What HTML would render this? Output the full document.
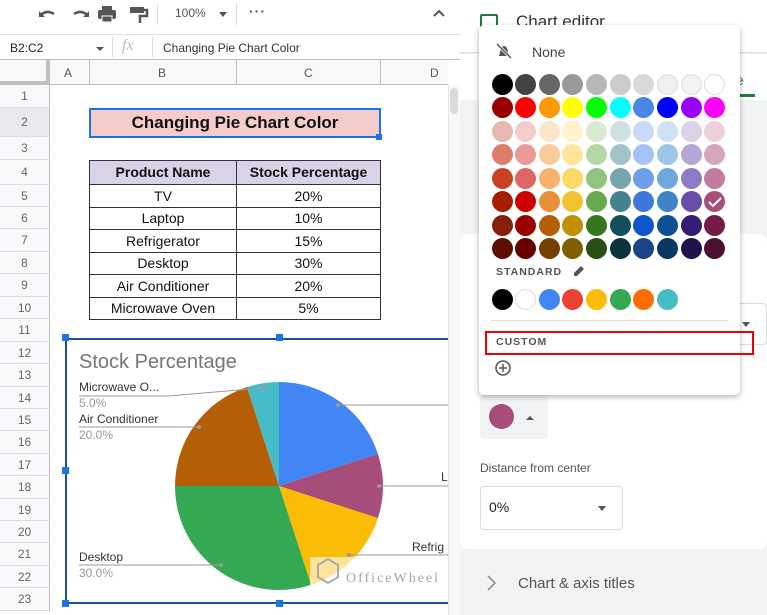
<!DOCTYPE html>
<html><head><meta charset="utf-8"><style>
*{margin:0;padding:0;box-sizing:border-box}
body{width:767px;height:615px;overflow:hidden;position:relative;background:#fff;font-family:"Liberation Sans",Arial,sans-serif}
.a{position:absolute}
.rh{position:absolute;left:0;width:50px;text-align:center;font-size:12px;color:#666;border-bottom:1px solid #dadce0;background:#f8f9fa;border-right:1px solid #c0c0c0}
.gl{position:absolute;left:50px;width:398px;height:1px;background:#e2e2e2}
.tc{position:absolute;text-align:center;font-size:14px;color:#111;border:1px solid #333;background:#fff}
.dot{position:absolute;width:21px;height:21px;border-radius:50%}
</style></head><body>
<!-- toolbar -->
<div class="a" style="left:0;top:0;width:460px;height:35px;background:#fff;border-bottom:1px solid #e0e0e0"></div>
<svg class="a" style="left:36px;top:5px" width="130" height="20" viewBox="0 0 130 20">
<path d="M4 11 Q10 4 18 9" stroke="#555" stroke-width="2.5" fill="none"/><path d="M3 6 L3 12 L9 12" fill="#555"/>
<path d="M40 11 Q34 4 26 9" stroke="#555" stroke-width="2.5" fill="none" transform="translate(12,0)"/><path d="M53 6 L53 12 L47 12" fill="#555"/>
<rect x="62" y="5" width="18" height="9" rx="2" fill="#555"/><rect x="66" y="1" width="10" height="4" fill="#555"/><rect x="66" y="11" width="10" height="6" fill="#555" stroke="#fff"/>
<rect x="94" y="2" width="14" height="6" fill="#555"/><path d="M108 5 h3 v6 h-7 v7" stroke="#555" stroke-width="2.5" fill="none"/>
</svg>
<div class="a" style="left:157px;top:5px;width:1px;height:20px;background:#ddd"></div>
<div class="a" style="left:175px;top:6px;font-size:12px;color:#555">100%</div>
<div class="a" style="left:219px;top:12px;border:4px solid transparent;border-top:5px solid #555"></div>
<div class="a" style="left:236px;top:3px;width:1px;height:22px;background:#ddd"></div>
<div class="a" style="left:249px;top:3px;font-size:14px;color:#555;letter-spacing:1px;font-weight:bold">···</div>
<svg class="a" style="left:432px;top:8px" width="14" height="10"><path d="M2 8 L7 3 L12 8" stroke="#555" stroke-width="2" fill="none"/></svg>
<!-- formula bar -->
<div class="a" style="left:0;top:35px;width:460px;height:25px;border-bottom:1px solid #c0c0c0;background:#fff"></div>
<div class="a" style="left:10px;top:41px;font-size:12px;color:#222">B2:C2</div>
<div class="a" style="left:96px;top:47px;border:4px solid transparent;border-top:4px solid #555"></div>
<div class="a" style="left:112px;top:37px;width:1px;height:20px;background:#ddd"></div>
<div class="a" style="left:122px;top:37px;font-size:16px;color:#bbb;font-style:italic;font-family:'Liberation Serif',serif">fx</div>
<div class="a" style="left:152px;top:37px;width:1px;height:20px;background:#ddd"></div>
<div class="a" style="left:163px;top:41px;font-size:12px;color:#333">Changing Pie Chart Color</div>
<!-- column headers -->
<div class="a" style="left:0;top:60px;width:448px;height:25px;background:#f8f9fa;border-bottom:1px solid #c0c0c0"></div>
<div class="a" style="left:0;top:60px;width:50px;height:25px;border-right:4px solid #c0c0c0;border-bottom:4px solid #c0c0c0"></div>
<div class="a" style="left:89px;top:60px;width:1px;height:25px;background:#c0c0c0"></div>
<div class="a" style="left:236px;top:60px;width:1px;height:25px;background:#c0c0c0"></div>
<div class="a" style="left:380px;top:60px;width:1px;height:25px;background:#c0c0c0"></div>
<div class="a" style="left:64px;top:66px;font-size:12px;color:#555">A</div>
<div class="a" style="left:158px;top:66px;font-size:12px;color:#555">B</div>
<div class="a" style="left:304px;top:66px;font-size:12px;color:#555">C</div>
<div class="a" style="left:430px;top:66px;font-size:12px;color:#555">D</div>
<!-- row headers -->
<div class="rh" style="top:85px;height:23px;line-height:23px">1</div>
<div class="rh" style="top:108px;height:29px;line-height:29px;background:#e8eaed">2</div>
<div class="rh" style="top:137px;height:23px;line-height:23px">3</div>
<div class="rh" style="top:160px;height:25px;line-height:25px">4</div>
<div class="rh" style="top:185px;height:22px;line-height:22px">5</div>
<div class="rh" style="top:207px;height:22px;line-height:22px">6</div>
<div class="rh" style="top:229px;height:23px;line-height:23px">7</div>
<div class="rh" style="top:252px;height:22px;line-height:22px">8</div>
<div class="rh" style="top:274px;height:23px;line-height:23px">9</div>
<div class="rh" style="top:297px;height:22px;line-height:22px">10</div>
<div class="rh" style="top:319px;height:23px;line-height:23px">11</div>
<div class="rh" style="top:342px;height:22px;line-height:22px">12</div>
<div class="rh" style="top:364px;height:23px;line-height:23px">13</div>
<div class="rh" style="top:387px;height:22px;line-height:22px">14</div>
<div class="rh" style="top:409px;height:22px;line-height:22px">15</div>
<div class="rh" style="top:431px;height:23px;line-height:23px">16</div>
<div class="rh" style="top:454px;height:22px;line-height:22px">17</div>
<div class="rh" style="top:476px;height:23px;line-height:23px">18</div>
<div class="rh" style="top:499px;height:22px;line-height:22px">19</div>
<div class="rh" style="top:521px;height:22px;line-height:22px">20</div>
<div class="rh" style="top:543px;height:23px;line-height:23px">21</div>
<div class="rh" style="top:566px;height:22px;line-height:22px">22</div>
<div class="rh" style="top:588px;height:23px;line-height:23px">23</div>
<!-- scrollbar -->
<div class="a" style="left:448px;top:85px;width:12px;height:530px;background:#f8f8f8;border-left:1px solid #e4e4e4"></div>
<div class="a" style="left:450px;top:88px;width:8px;height:26px;background:#dadada;border-radius:4px"></div>
<!-- title cell -->
<div class="a" style="left:89px;top:108px;width:292px;height:30px;background:#f4cccc;border:2px solid #1a73e8;text-align:center;font-weight:bold;font-size:17px;line-height:26px;color:#111">Changing Pie Chart Color</div>
<div class="a" style="left:376px;top:134px;width:6px;height:6px;background:#1a73e8"></div>
<!-- table -->
<div class="tc" style="left:89px;top:160px;width:148px;height:25px;background:#d9d2e9;font-weight:bold;line-height:23px">Product Name</div>
<div class="tc" style="left:236px;top:160px;width:145px;height:25px;background:#d9d2e9;font-weight:bold;line-height:23px">Stock Percentage</div>
<div class="tc" style="left:89px;top:184px;width:148px;height:24px;line-height:22px">TV</div><div class="tc" style="left:236px;top:184px;width:145px;height:24px;line-height:22px">20%</div>
<div class="tc" style="left:89px;top:207px;width:148px;height:23px;line-height:21px">Laptop</div><div class="tc" style="left:236px;top:207px;width:145px;height:23px;line-height:21px">10%</div>
<div class="tc" style="left:89px;top:229px;width:148px;height:24px;line-height:22px">Refrigerator</div><div class="tc" style="left:236px;top:229px;width:145px;height:24px;line-height:22px">15%</div>
<div class="tc" style="left:89px;top:252px;width:148px;height:23px;line-height:21px">Desktop</div><div class="tc" style="left:236px;top:252px;width:145px;height:23px;line-height:21px">30%</div>
<div class="tc" style="left:89px;top:274px;width:148px;height:24px;line-height:22px">Air Conditioner</div><div class="tc" style="left:236px;top:274px;width:145px;height:24px;line-height:22px">20%</div>
<div class="tc" style="left:89px;top:297px;width:148px;height:23px;line-height:21px">Microwave Oven</div><div class="tc" style="left:236px;top:297px;width:145px;height:23px;line-height:21px">5%</div>
<!-- chart -->
<div class="a" style="left:65px;top:338px;width:383px;height:266px;background:#fff;border:2px solid #1a4fa0;border-right:none"></div>
<svg class="a" style="left:0;top:330px" width="448" height="285" viewBox="0 330 448 285">
<text x="79" y="368" font-size="20" fill="#757575" font-family="Liberation Sans">Stock Percentage</text>
<path d="M279 486 L279 382 A104 104 0 0 1 377.9 453.9 Z" fill="#4285f4"/>
<path d="M279 486 L377.9 453.9 A104 104 0 0 1 377.9 518.1 Z" fill="#a64d79"/>
<path d="M279 486 L377.9 518.1 A104 104 0 0 1 311.1 584.9 Z" fill="#fbbc04"/>
<path d="M279 486 L311.1 584.9 A104 104 0 0 1 175 486 Z" fill="#34a853"/>
<path d="M279 486 L175 486 A104 104 0 0 1 246.9 387.1 Z" fill="#b45f06"/>
<path d="M279 486 L246.9 387.1 A104 104 0 0 1 279 382 Z" fill="#46bdc6"/>
<g stroke="#999" stroke-width="1" fill="none">
<path d="M79 396 H168 L263 388"/><path d="M79 427 H199"/><path d="M79 565 H221"/>
<path d="M338 405 H448"/><path d="M379 486 H448"/><path d="M349 555 H448"/>
</g>
<g fill="#999"><circle cx="263" cy="388" r="2"/><circle cx="199" cy="427" r="2"/><circle cx="221" cy="565" r="2"/><circle cx="338" cy="405" r="2"/><circle cx="379" cy="486" r="2"/><circle cx="349" cy="555" r="2"/></g>
<g font-size="12" font-family="Liberation Sans"><text x="79" y="391" fill="#333">Microwave O...</text><text x="79" y="407" fill="#999">5.0%</text>
<text x="79" y="423" fill="#333">Air Conditioner</text><text x="79" y="439" fill="#999">20.0%</text>
<text x="79" y="561" fill="#333">Desktop</text><text x="79" y="577" fill="#999">30.0%</text>
<text x="441" y="481" fill="#333">L</text><text x="412" y="551" fill="#333">Refrig</text></g>
<rect x="310" y="557" width="140" height="35" fill="#fff" opacity="0.6"/>
<text x="346" y="582" font-size="14" fill="#9aa" letter-spacing="2" font-family="Liberation Serif">OfficeWheel</text>
<path d="M318 565 l10 -6 l10 6 v12 l-10 6 l-10 -6 z" stroke="#aaa" stroke-width="2" fill="none"/>
</svg>
<div class="a" style="left:62px;top:334px;width:7px;height:7px;background:#1a73e8"></div>
<div class="a" style="left:276px;top:334px;width:7px;height:7px;background:#1a73e8"></div>
<div class="a" style="left:62px;top:467px;width:7px;height:7px;background:#1a73e8"></div>
<div class="a" style="left:62px;top:600px;width:7px;height:7px;background:#1a73e8"></div>
<div class="a" style="left:276px;top:600px;width:7px;height:7px;background:#1a73e8"></div>
<!-- right panel -->
<div class="a" style="left:460px;top:0;width:307px;height:615px;background:#f1f3f4"></div>
<div class="a" style="left:460px;top:0;width:307px;height:53px;background:#fff;border-bottom:1px solid #ddd"></div>
<div class="a" style="left:480px;top:14px;width:18px;height:18px;border:2px solid #188038;border-radius:2px"></div>
<div class="a" style="left:516px;top:12px;font-size:17px;color:#333">Chart editor</div>
<div class="a" style="left:460px;top:54px;width:307px;height:46px;background:#fff"></div>
<div class="a" style="left:736px;top:72px;font-size:14px;color:#188038">e</div>
<div class="a" style="left:720px;top:94px;width:35px;height:3px;background:#188038"></div>
<div class="a" style="left:460px;top:234px;width:307px;height:315px;background:#fff;border-radius:8px"></div>
<div class="a" style="left:700px;top:303px;width:67px;height:42px;border:1px solid #dadce0;border-radius:4px;background:#fff"></div>
<div class="a" style="left:742px;top:322px;border:4px solid transparent;border-top:5px solid #555"></div>
<div class="a" style="left:480px;top:395px;width:68px;height:44px;background:#f1f3f4;border-radius:4px"></div>
<div class="a" style="left:489px;top:404px;width:25px;height:25px;border-radius:50%;background:#a64d79"></div>
<div class="a" style="left:526px;top:412px;border:4px solid transparent;border-bottom:4px solid #555"></div>
<div class="a" style="left:480px;top:461px;font-size:12px;color:#555">Distance from center</div>
<div class="a" style="left:480px;top:486px;width:143px;height:44px;border:1px solid #dadce0;border-radius:4px;background:#fff"></div>
<div class="a" style="left:489px;top:499px;font-size:14px;color:#222">0%</div>
<div class="a" style="left:598px;top:506px;border:4px solid transparent;border-top:5px solid #555"></div>
<svg class="a" style="left:486px;top:574px" width="12" height="18"><path d="M2 2 L9 9 L2 16" stroke="#888" stroke-width="1.5" fill="none"/></svg>
<div class="a" style="left:518px;top:575px;font-size:15px;color:#555">Chart &amp; axis titles</div>
<!-- popup -->
<div class="a" style="left:479px;top:25px;width:261px;height:370px;background:#fff;border-radius:5px;box-shadow:0 2px 6px rgba(0,0,0,.3)"></div>
<svg class="a" style="left:496px;top:43px" width="16" height="16"><path d="M3 13 L5 5 Q8 1 11 5 L13 13 Z" fill="#555"/><path d="M1 1 L15 15" stroke="#fff" stroke-width="3"/><path d="M1 1 L15 15" stroke="#555" stroke-width="1.5"/></svg>
<div class="a" style="left:532px;top:44px;font-size:14px;color:#444">None</div>
<div id="grid"></div>
<div class="a" style="left:496px;top:266px;font-size:10.5px;color:#555;letter-spacing:1px;font-weight:bold">STANDARD</div>
<svg class="a" style="left:572px;top:264px" width="14" height="14"><path d="M2 12 L2 9 L9 2 L12 5 L5 12 Z" fill="#555"/></svg>
<div class="a" style="left:491px;top:320px;width:237px;height:1px;background:#ddd"></div>
<div class="a" style="left:485px;top:331px;width:269px;height:24px;border:2px solid #e00"></div>
<div class="a" style="left:496px;top:336px;font-size:10.5px;color:#555;letter-spacing:1px;font-weight:bold">CUSTOM</div>
<svg class="a" style="left:494px;top:359px" width="18" height="18"><circle cx="9" cy="9" r="7" stroke="#555" stroke-width="1.5" fill="none"/><path d="M9 5 V13 M5 9 H13" stroke="#555" stroke-width="1.5"/></svg>
<script>
var rows=[["#000","#434343","#666","#999","#b7b7b7","#ccc","#d9d9d9","#efefef","#f3f3f3","#fff"],
["#980000","#f00","#f90","#ff0","#0f0","#0ff","#4a86e8","#00f","#90f","#f0f"],
["#e6b8af","#f4cccc","#fce5cd","#fff2cc","#d9ead3","#d0e0e3","#c9daf8","#cfe2f3","#d9d2e9","#ead1dc"],
["#dd7e6b","#ea9999","#f9cb9c","#ffe599","#b6d7a8","#a2c4c9","#a4c2f4","#9fc5e8","#b4a7d6","#d5a6bd"],
["#cc4125","#e06666","#f6b26b","#ffd966","#93c47d","#76a5af","#6d9eeb","#6fa8dc","#8e7cc3","#c27ba0"],
["#a61c00","#c00","#e69138","#f1c232","#6aa84f","#45818e","#3c78d8","#3d85c6","#674ea7","#a64d79"],
["#85200c","#900","#b45f06","#bf9000","#38761d","#134f5c","#1155cc","#0b5394","#351c75","#741b47"],
["#5b0f00","#600","#783f04","#7f6000","#274e13","#0c343d","#1c4587","#073763","#20124d","#4c1130"],
["#000","#fff","#4285f4","#ea4335","#fbbc04","#34a853","#ff6d01","#46bdc6"]];
var h="";
rows.forEach(function(r,i){var y=(i<8?84+i*23.5:299)-10.5;r.forEach(function(c,j){var x=502+j*23.65-10.5;
h+='<div class="dot" style="left:'+x+'px;top:'+y+'px;background:'+c+';'+((c=="#fff"||c=="#f3f3f3"||c=="#efefef")?'border:1px solid #ddd;':'')+'"></div>';});});
h+='<svg class="a" style="left:707px;top:195px" width="16" height="14"><path d="M2 7 L6 11 L14 3" stroke="#fff" stroke-width="2" fill="none"/></svg>';
document.getElementById("grid").innerHTML=h;
</script>
</body></html>
